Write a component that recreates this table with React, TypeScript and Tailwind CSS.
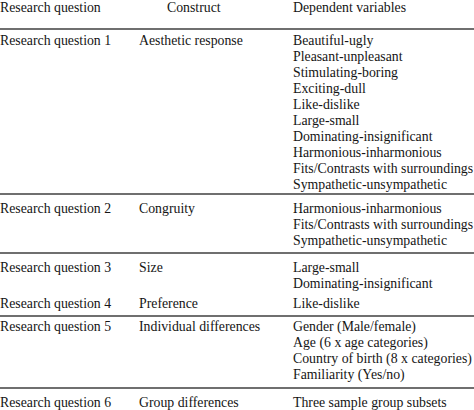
import React from "react";

type Row = {
  question: string;
  construct: string;
  variables: string[];
  cls: string;
};

const rows: Row[] = [
  {
    question: "Research question 1",
    construct: "Aesthetic response",
    variables: [
      "Beautiful-ugly",
      "Pleasant-unpleasant",
      "Stimulating-boring",
      "Exciting-dull",
      "Like-dislike",
      "Large-small",
      "Dominating-insignificant",
      "Harmonious-inharmonious",
      "Fits/Contrasts with surroundings",
      "Sympathetic-unsympathetic",
    ],
    cls: "pt-[3px] pb-[0px] border-b-2 border-[#6f6f6f]",
  },
  {
    question: "Research question 2",
    construct: "Congruity",
    variables: [
      "Harmonious-inharmonious",
      "Fits/Contrasts with surroundings",
      "Sympathetic-unsympathetic",
    ],
    cls: "pt-[6px] pb-[3px] border-b-2 border-[#6f6f6f]",
  },
  {
    question: "Research question 3",
    construct: "Size",
    variables: ["Large-small", "Dominating-insignificant"],
    cls: "pt-[6px] pb-[3px]",
  },
  {
    question: "Research question 4",
    construct: "Preference",
    variables: ["Like-dislike"],
    cls: "pt-[1px] pb-[3px] border-b-2 border-[#6f6f6f]",
  },
  {
    question: "Research question 5",
    construct: "Individual differences",
    variables: [
      "Gender (Male/female)",
      "Age (6 x age categories)",
      "Country of birth (8 x categories)",
      "Familiarity (Yes/no)",
    ],
    cls: "pt-[2px] pb-[4px] border-b-2 border-[#6f6f6f]",
  },
  {
    question: "Research question 6",
    construct: "Group differences",
    variables: ["Three sample group subsets"],
    cls: "pt-[6px]",
  },
];

export default function App() {
  return (
    <div
      className="w-[474px] h-[410px] overflow-hidden bg-white text-[#151515] text-[13.8px] leading-[16px]"
      style={{ fontFamily: '"Liberation Serif", "Times New Roman", serif' }}
    >
      {/* Header */}
      <div className="grid grid-cols-[139px_154px_1fr] h-[30px] border-b-2 border-[#6f6f6f]">
        <div>Research question</div>
        <div className="pl-[28px]">Construct</div>
        <div>Dependent variables</div>
      </div>

      {rows.map((r) => (
        <div key={r.question} className={`grid grid-cols-[139px_154px_1fr] ${r.cls}`}>
          <div>{r.question}</div>
          <div>{r.construct}</div>
          <div className="whitespace-nowrap">
            {r.variables.map((v, i) => (
              <div key={i}>{v}</div>
            ))}
          </div>
        </div>
      ))}
    </div>
  );
}
